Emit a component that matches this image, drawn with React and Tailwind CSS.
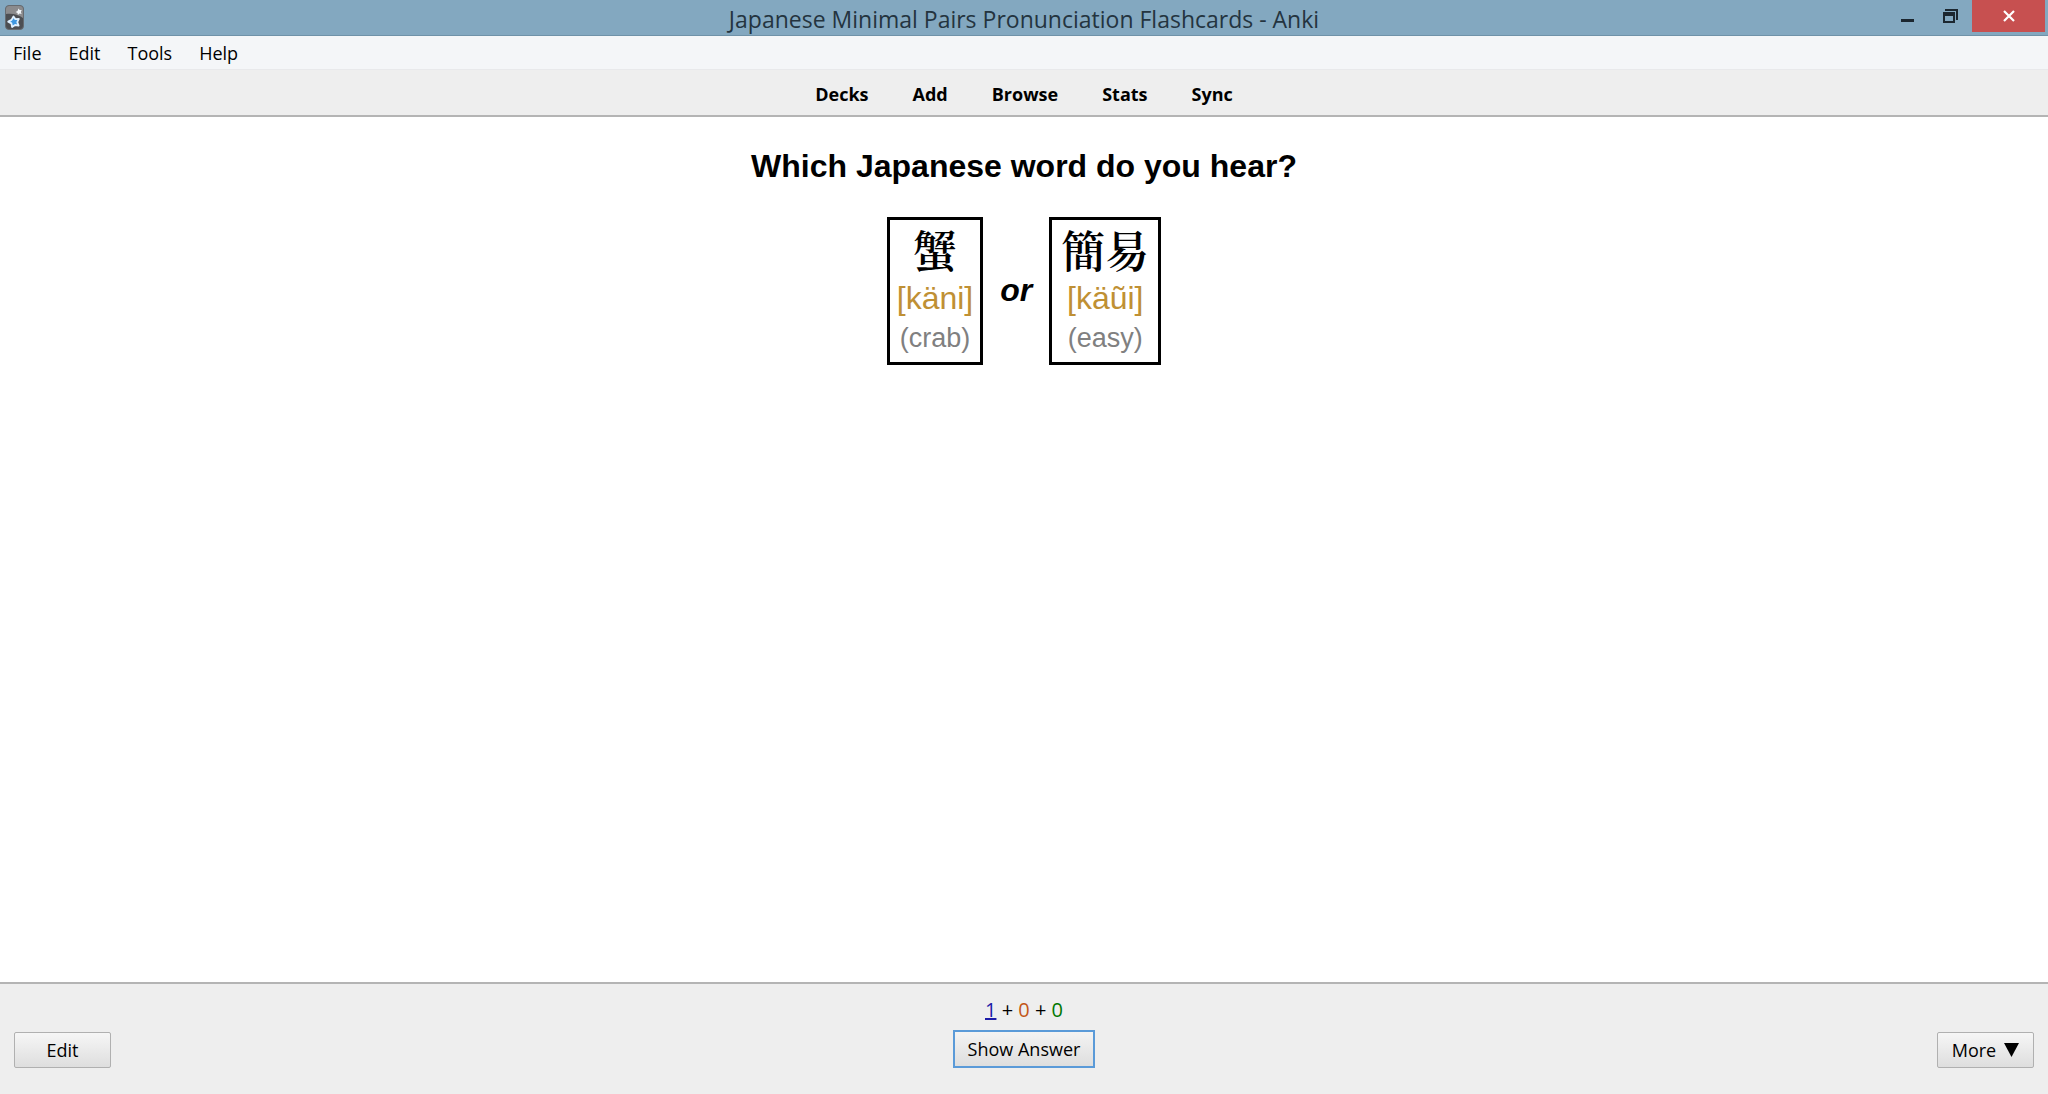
const menus = ['File', 'Edit', 'Tools', 'Help'];
const links = ['Decks', 'Add', 'Browse', 'Stats', 'Sync'];

const words = [
  { kanji: '蟹', ipa: '[käni]', meaning: '(crab)' },
  { kanji: '簡易', ipa: '[käũi]', meaning: '(easy)' },
];

function AnkiIcon() {
  return (
    <svg width="19" height="25" viewBox="0 0 19 25" aria-hidden="true">
      <rect x="0.5" y="0.5" width="18" height="24" rx="3.5" fill="#4c4e52" stroke="#666b70" />
      <path d="M1 4a3 3 0 0 1 3-3h11a3 3 0 0 1 3 3v9C14 10 8 8 1 9z" fill="#8b8b8d" />
      <path d="M13.500 3.500l1.200 1.600 2-.1-.9 1.900.8 2-2.100-.3-1.600 1.400-.4-2.100-1.900-1 1.900-1z" fill="#f2f6fa" />
      <path
        d="M8.500 11.500l1.900 2.600 3.400-.2-1.500 3.200 1.300 3.500-3.500-.6-3 2.100-.7-3.700-3.200-1.800 3.300-1.700z"
        fill="#3f97e0"
        stroke="#dff0ff"
        strokeWidth="1.800"
        strokeLinejoin="round"
      />
    </svg>
  );
}

function TitleBar() {
  return (
    <header className="grid h-9 grid-cols-[1fr_auto_1fr] border-b border-[#6f92a8] bg-[#83a8c0]">
      <div className="flex items-center pl-[5px]">
        <AnkiIcon />
      </div>
      <h1 className="pt-[3px] text-[23px] leading-8 text-[#24343f]">
        Japanese Minimal Pairs Pronunciation Flashcards - Anki
      </h1>
      <div className="flex items-start justify-end pr-[3px]">
        <button aria-label="Minimize" className="flex h-8 w-[42px] items-center justify-center">
          <svg width="14" height="14" viewBox="0 0 14 14">
            <path d="M1 10h13v3H1z" fill="#1c2730" />
          </svg>
        </button>
        <button aria-label="Restore" className="flex h-8 w-[44px] items-center justify-center">
          <svg width="16" height="14" viewBox="0 0 16 14">
            <path d="M3 0h13v11h-2V2H3z" fill="#1c2730" />
            <path d="M1 3h12v11H1zM3 7v5h8V7z" fill="#1c2730" fillRule="evenodd" />
          </svg>
        </button>
        <button aria-label="Close" className="flex h-8 w-[73px] items-center justify-center bg-[#c75050]">
          <svg width="12" height="12" viewBox="0 0 12 12">
            <path d="M1 1l10 10M11 1L1 11" stroke="#fff" strokeWidth="2.2" />
          </svg>
        </button>
      </div>
    </header>
  );
}

function WordCard({ word }) {
  return (
    <div className="border-3 border-black px-[7px] py-1 text-center">
      <p
        lang="ja"
        className="px-0.5 pb-1 font-['Noto_Serif_CJK_JP','Noto_Sans_CJK_JP',serif] text-[44px] leading-[50px] font-semibold"
      >
        {word.kanji}
      </p>
      <p className="text-[32px] leading-10 text-[#bf9034]">{word.ipa}</p>
      <p className="text-[27px] leading-10 text-[#808080]">{word.meaning}</p>
    </div>
  );
}

export default function App() {
  return (
    <div className="flex min-h-screen flex-col bg-white font-['Open_Sans',sans-serif] text-lg text-black">
      <TitleBar />

      <nav className="flex h-[34px] items-center gap-[27px] border-b border-[#e8e9eb] bg-[#f4f6f8] px-[13px]">
        {menus.map(item => (
          <button key={item}>{item}</button>
        ))}
      </nav>

      <nav className="flex h-[47px] items-center justify-center gap-11 border-b-2 border-[#b4b4b4] bg-[#eeeeee] pt-0.5 font-bold">
        {links.map(item => (
          <a key={item} href="#">{item}</a>
        ))}
      </nav>

      {/* Card */}
      <main className="flex flex-1 flex-col items-center pt-[27px] font-['Liberation_Sans',sans-serif]">
        <h2 className="text-[32px] leading-[45px] font-bold">Which Japanese word do you hear?</h2>
        <div className="mt-7 flex items-center gap-[17px]">
          <WordCard word={words[0]} />
          <em className="text-[32px] font-bold">or</em>
          <WordCard word={words[1]} />
        </div>
      </main>

      {/* Answer bar */}
      <footer className="grid h-28 grid-cols-[1fr_auto_1fr] items-end border-t-2 border-[#b4b4b4] bg-[#eeeeee] px-[14px] pb-[26px]">
        <div>
          <button className="h-9 w-[97px] rounded-xs border border-[#b0b0b0] bg-linear-to-b from-[#f6f6f6] to-[#dedede]">
            Edit
          </button>
        </div>
        <div className="flex flex-col items-center gap-1">
          <p className="text-xl leading-8">
            <u className="text-[#1c1ca8]">1</u> + <span className="text-[#c35617]">0</span> +{' '}
            <span className="text-[#007700]">0</span>
          </p>
          <button className="h-[38px] w-[142px] border-2 border-[#5a9ad8] bg-linear-to-b from-[#f3f3f3] to-[#dedede]">
            Show Answer
          </button>
        </div>
        <div className="flex justify-end">
          <button className="flex h-9 w-[97px] items-center justify-center gap-2 rounded-xs border border-[#b0b0b0] bg-linear-to-b from-[#f6f6f6] to-[#dedede]">
            More
            <svg width="15" height="14" viewBox="0 0 15 14" aria-hidden="true">
              <path d="M0 0h15L7.500 14z" />
            </svg>
          </button>
        </div>
      </footer>
    </div>
  );
}
